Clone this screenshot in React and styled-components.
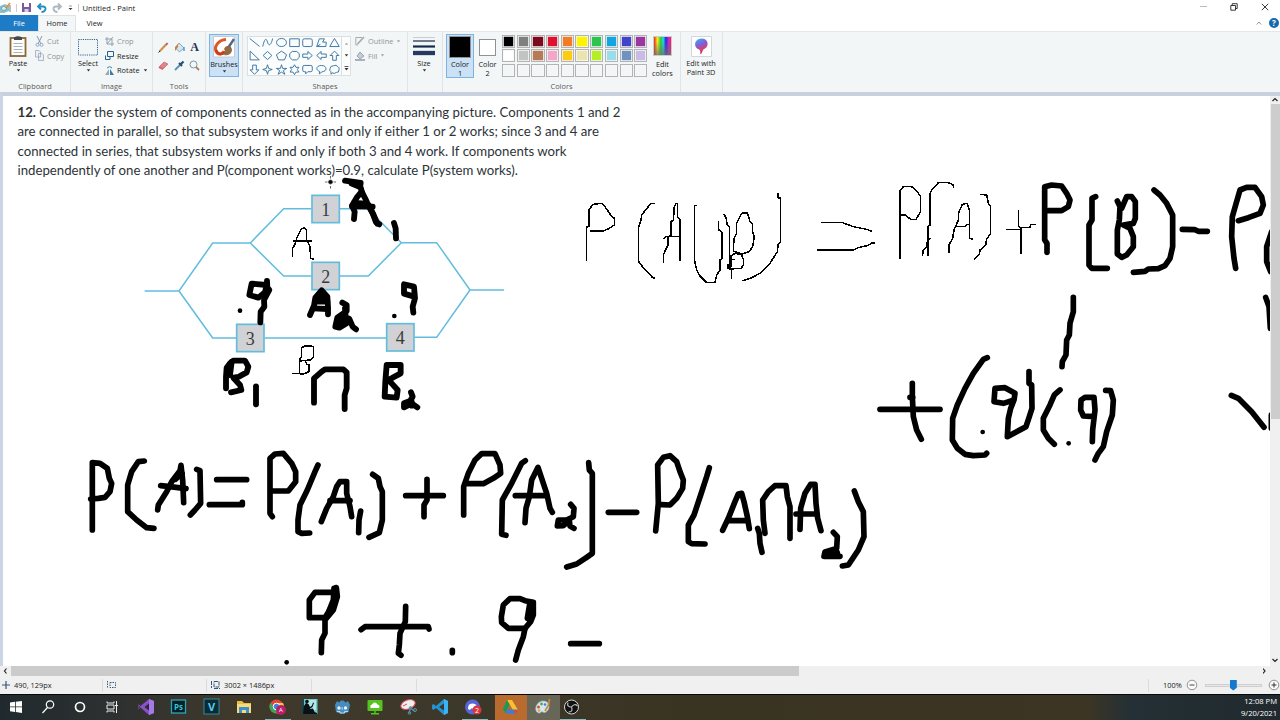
import React from 'react'
import styled, { createGlobalStyle } from 'styled-components'

const palette = [
  '#000000', '#7f7f7f', '#7b0a1c', '#e0102f', '#f47b26', '#fdf500', '#2bc44e', '#12a5e0', '#4044c8', '#9a35a2',
  '#ffffff', '#c3c3c3', '#b67a57', '#f5a6c8', '#fccb15', '#ece4ae', '#b5ee22', '#99dde8', '#7092be', '#c6bce6',
  '', '', '', '', '', '', '', '', '', '',
]

// every shape lives in a 30x30 box
const shapes = [
  'M2 4L29 26', 'M2 26C8 0 12 4 15 14S24 26 29 4', 'M15 4C33 4 33 26 15 26S-3 4 15 4Z', 'M2 5H28V26H2Z',
  'M6 5H24Q28 5 28 9V22Q28 26 24 26H6Q2 26 2 22V9Q2 5 6 5Z', 'M2 26L9 5H23L18 14H28L27 26H2L12 20', 'M15 4L28 26H2Z',
  'M3 3V27H28Z', 'M15 4L27 15L15 26L3 15Z', 'M15 3L29 13L23 27H7L1 13Z', 'M9 4H21L28 10V20L21 27H9L2 20V10Z',
  'M2 11H16V4L28 15L16 26V20H2Z', 'M28 11H14V4L2 15L14 26V20H28Z', 'M10 28V15H3L15 3L27 15H20V28Z',
  'M10 3V16H3L15 28L27 16H20V3Z', 'M15 2L18 12L28 15L18 18L15 28L12 18L2 15L12 12Z',
  'M15 2L18 12H29L20 18L24 28L15 22L6 28L10 18L1 12H12Z',
  'M15 2L19 9H27L23 15L27 22H19L15 29L11 22H3L7 15L3 9H11Z',
  'M6 4H24Q28 4 28 8V17Q28 21 24 21H16L10 27V21H6Q2 21 2 17V8Q2 4 6 4Z',
  'M10 20C-2 17 0 4 15 4S32 20 17 21L9 27Z',
  'M9 24L6 28L5 21Q0 18 3 12Q4 4 12 5Q20 1 24 7Q30 10 27 16Q28 24 20 23Q14 28 9 24Z',
]

// ink strokes: each sheet has an origin and keeps its points at three units per pixel
const sheets = [
  {
    x: 130, y: 175, size: 17.5,
    thin: [
      '488,243 488,220 495,208 500,190 512,165 522,157 530,165 530,195 540,215 542,250 551,253',
      '490,198 543,198',
      '487,596 508,596 508,555 515,545 514,520 523,513 550,514 550,548 540,555 508,558',
      '525,557 530,567 537,570 537,590 520,597 508,596',
    ],
    fat: [
      '672,132 674,110 666,92 680,68 695,50 708,75 715,92 728,115 738,142 748,148',
      '666,94 728,95', '672,84 708,86', '645,17 692,24 690,36 665,26', '693,40 697,58', '716,90 730,118 742,146',
      '792,144 797,160 798,190',
      '411,318 412,338 418,345 402,375 403,395 392,410 391,442',
      '410,330 365,326 358,360 385,368 405,352 410,330',
      '540,420 552,392 556,368 575,346 592,365 594,395 594,418', '556,380 592,380', '550,400 592,402', '566,364 584,366',
      '637,383 650,390 650,408 622,428 616,455 628,458 650,445 658,432 668,455 678,463', '625,435 655,430 630,450', '645,400 648,440',
      '850,413 848,395 855,370 852,335 822,328 822,356 850,364',
      '288,640 288,605 290,578 300,565 310,557 345,557 355,575 350,592 325,606 310,608 330,630 334,645 303,652',
      '305,560 300,600',
      '378,634 378,688',
      '552,683 552,610 575,590 585,583 640,583 650,592 650,640 644,660 644,702',
      '812,570 770,570 766,620 764,665 800,668 803,645 785,625 775,615 812,595 812,570',
      '843,652 848,665 840,678 822,685 822,697 845,685 862,697', '826,690 845,680 845,692',
    ],
    dots: ['330,407', '793,423'],
  },
  {
    x: 570, y: 170, size: 16.5,
    thin: [
      '49,270 49,172 57,168 57,118 70,103 95,100 105,110 122,135 133,145 133,165 118,175 100,183 63,183',
      '254,101 242,101 215,135 213,150 206,170 206,275 220,293 248,323 254,325',
      '281,277 281,252 294,225 294,200 303,195 303,155 310,150 313,110 318,101 323,101 323,140 330,150 330,270',
      '280,206 288,200 330,200',
      '380,107 374,107 374,272 380,300 390,318 410,338 435,338 440,315 450,300 450,270 456,265 456,188 445,178 445,155',
      '462,134 468,142 472,165 478,170 478,290 484,300 484,325', '474,284 474,296 481,296 481,256',
      '490,240 492,205 500,190 500,160 515,130 532,128 540,155 548,162 548,185 553,200 548,230 538,245 515,252 490,243',
      '484,290 484,258 495,250 515,255 520,268 520,285 513,295 478,297', '484,268 492,268',
      '624,71 624,83 632,85 632,215 625,222 622,245 600,280 570,310 545,323 518,332',
      '756,157 815,157 850,170 890,178 905,184', '742,240 850,240 865,233 895,226 905,219 913,219',
    ],
    fat: [],
    dots: [],
  },
  {
    x: 870, y: 170, size: 17,
    thin: [
      '90,264 90,62 100,50 125,50 142,65 152,80 152,125 138,148 122,148 105,135 90,135',
      '251,52 249,44 235,38 205,38 185,60 180,72 180,165 174,170 174,255',
      '158,255 160,240 170,232 170,218 180,205', '174,240 176,205',
      '237,248 237,225 248,205 252,180 265,150 265,130 277,103 292,100 298,120 298,205 307,207',
      '256,170 284,170 290,164 298,164',
      '333,73 350,75 355,100 362,110 362,190 350,208 347,225 330,240 328,252 314,267',
      '411,178 452,178 455,172 480,172 483,164 497,164', '446,121 446,170 453,175 453,249',
    ],
    fat: [
      '531,247 531,220 524,210 524,50 545,45 575,48 590,70 600,90 595,110 575,122 535,122',
      '677,80 666,85 666,150 657,165 657,285 665,295 712,295',
      '742,93 750,110 748,150 742,180 742,252 755,262 770,255 790,230 790,200 780,175 760,165 790,160 796,145 796,95 785,80 770,80 755,115',
      '852,60 870,75 890,100 908,135 908,230 900,265 885,287 865,296 835,297 825,304 790,307',
      '937,178 975,179 985,184 1012,184',
      '1097,295 1092,265 1085,200 1087,140 1097,105 1110,60 1130,52 1155,52 1175,80 1180,105 1170,130 1135,143 1105,152',
      '1205,185 1190,230 1190,275 1202,305',
      '610,382 610,425 600,460 598,495 590,510 588,555 577,575 576,590',
      '1187,382 1197,410 1201,475',
      '30,718 210,718', '127,640 127,680 130,740 140,780 154,808', '120,682 128,682',
      '352,563 340,568 310,610 285,655 262,705 248,745 247,810 262,835 285,853 310,857 345,855 350,850',
      '432,690 400,700 372,695 375,655 405,653 435,670 432,690 422,715 415,745 412,800 440,785 468,770 478,740 486,715 485,645 477,640 477,605',
      '570,660 553,675 540,705 520,745 520,780 535,805 553,823',
      '672,740 640,738 632,720 633,690 645,682 672,682 675,720 668,780 667,815',
      '707,661 722,662 730,690 727,735 710,785 700,830 685,850 675,870',
      '1084,676 1105,685 1145,725 1182,772', '1204,735 1204,775',
    ],
    dots: ['338,786', '596,820'],
  },
  {
    x: 70, y: 440, size: 17,
    thin: [],
    fat: [
      '67,270 67,68 90,70 112,85 118,115 125,130 120,155 105,172 85,175 62,177',
      '223,63 205,65 185,95 173,135 173,215 200,240 230,263 252,265',
      '263,210 265,195 290,155 305,125 330,92 333,76 338,120 341,188', '272,137 300,140 348,146', '316,118 336,100',
      '380,88 390,92 392,190 375,210 361,225',
      '440,119 530,119', '418,194 517,194 517,187',
      '607,230 600,220 600,55 615,42 640,40 665,70 677,95 677,125 655,153 610,153',
      '744,75 735,95 712,150 690,195 684,240 684,275 695,280 719,279',
      '754,245 770,205 790,170 800,140 810,125 830,125 830,160 840,200 845,230', '780,182 840,182',
      '872,213 867,240 866,278',
      '908,103 925,115 930,140 937,155 937,240 928,278 897,292',
      '1007,167 1120,167', '1071,118 1071,180 1062,195 1062,230',
      '799,443 802,470 790,510 765,540 765,580 755,600 754,638',
      '797,457 735,457 718,480 718,533 765,533 785,500', '792,445 790,480 778,510',
      '873,569 885,560 1075,560 1077,567', '1007,499 1006,545 990,580 988,615 985,640 993,646',
      '1147,631 1147,638',
    ],
    dots: ['650,667'],
  },
  {
    x: 440, y: 440, size: 17,
    thin: [],
    fat: [
      '71,225 71,140 85,100 105,60 125,41 165,41 180,75 182,100 160,115 130,131 80,131',
      '256,62 245,70 215,130 187,180 185,283 198,286',
      '255,248 258,205 268,170 275,120 294,82 305,115 320,160 330,205 337,217', '226,167 320,167',
      '392,193 402,205 400,230 380,240 355,240 352,258 370,257 388,242 390,258 402,265',
      '446,68 448,90 457,100 457,340 440,352 410,372 380,381',
      '505,217 590,217',
      '647,273 655,190 653,75 670,52 690,47 710,65 720,95 730,120 728,145 710,175 690,195 665,194',
      '808,83 800,110 782,165 762,225 745,255 745,305 755,311 795,312',
      '848,271 865,235 885,185 895,162 905,160 912,185 922,230 928,266', '870,242 922,242',
      '953,265 958,280 960,310 966,337',
      '975,280 970,240 968,180 985,155 1005,137 1038,137 1042,170 1050,200 1050,295',
      '1080,268 1082,205 1095,160 1112,133 1125,133 1128,190 1133,235 1143,272', '1068,222 1130,222',
      '1180,277 1192,290 1190,325 1155,336 1152,349 1200,349', '1160,343 1192,338',
      '1243,153 1255,185 1270,215 1272,290 1255,330 1225,375 1207,378',
      '280,487 255,482 240,476 210,476 190,495 184,530 185,548 205,565 255,565 272,545 280,525 280,487 270,487 262,535',
      '255,565 250,590 235,630 227,660',
      '392,611 478,611',
    ],
    dots: [],
  },
]

const Svg = ({ w, h, box, children }) => (
  <svg width={w} height={h} viewBox={box || `0 0 ${w} ${h}`} fill="none">{children}</svg>
)

const CaretDown = () => <Svg w={5} h={3}><path d="M.8 .3H4.2L2.5 2.6Z" fill="#333" /></Svg>

const Ink = () => (
  <InkLayer viewBox="3 96 1268 570" fill="none" stroke="#000" strokeLinecap="round" strokeLinejoin="round">
    {sheets.map((s) => (
      <g key={`${s.x}-${s.y}`} transform={`translate(${s.x} ${s.y}) scale(.33333)`}>
        <g shapeRendering="crispEdges" strokeWidth="4.6">{s.thin.map((p) => <polyline key={p} points={p} />)}</g>
        {s.fat.map((p) => <polyline key={p} points={p} strokeWidth={s.size} />)}
        {s.dots.map((p) => <polyline key={p} points={`${p} ${p}`} strokeWidth="14" />)}
      </g>
    ))}
    <g stroke="#444" strokeWidth=".8" strokeLinecap="butt">
      <circle cx="330.5" cy="182" r="2" fill="#000" />
      <path d="M325 182H327.5M333.500 182H336M330.500 176V178.500M330.500 186V188.500" />
    </g>
  </InkLayer>
)

const Diagram = () => (
  <InkLayer viewBox="3 96 1268 570" fill="none">
    <g transform="translate(130 175) scale(.33333)" stroke="#62bddd" strokeWidth="4.600">
      <path d="M44 348H147L248 204H361L461 101H545M629 101H713L814 203H920L1020 345H1122M361 204L461 303H546M630 303H715L814 203M147 348L248 489H320M404 489H769M853 487H920L1020 345" />
      {[[587, 102, 1], [587, 303, 2], [361, 489, 3], [811, 487, 4]].map(([x, y, n]) => (
        <g key={n}>
          <rect x={x - 41} y={y - 41} width="82" height="82" fill="#d0d2d5" strokeWidth="5" />
          <text x={x} y={y + 20} stroke="none" fill="#3a3a3a" fontSize="54" textAnchor="middle" fontFamily="'Liberation Serif', serif">{n}</text>
        </g>
      ))}
    </g>
  </InkLayer>
)

const taskIcons = [
  { w: 32, art: <path d="M5 7.500L10 6.800V11.500H5ZM10.800 6.700L17 6V11.500H10.800ZM5 12.300H10V17L5 16.300ZM10.800 12.300H17V18L10.800 17.100Z" fill="#fff" /> },
  { w: 32, art: <g stroke="#fff" strokeWidth="1.200"><circle cx="13" cy="9.500" r="3.700" /><path d="M10.500 12.500L5.500 18" /></g> },
  { w: 32, art: <circle cx="11" cy="12" r="4.500" stroke="#fff" strokeWidth="1.700" /> },
  { w: 33, art: <path d="M6 6.500V8H13V6.500M6 17.500V16H13V17.500M6 10H13V14H6ZM15.500 6V18M14 10.500H17" stroke="#eee" /> },
  { w: 33, art: <g><path d="M15 4L20 6V18L15 20L6.500 12.500L4.500 14.500V9L6.500 11Z" fill="#8a50c8" /><path d="M15 8.500V15.500L10.500 12ZM5 10.500V13.500L6 12Z" fill="#2c2a2c" /><path d="M15 4L20 6V18L15 20Z" fill="#a778e8" /></g> },
  { w: 33, art: <g><rect x="4.500" y="5" width="14" height="13" fill="#061e26" stroke="#2ca6b5" strokeWidth="1.300" /><text x="11.500" y="14.500" textAnchor="middle" fontSize="8" fontWeight="700" fill="#37c4d6">Ps</text></g> },
  { w: 32, art: <g><rect x="4" y="4" width="15" height="15" fill="#082b35" stroke="#36899c" /><text x="11.500" y="15.500" textAnchor="middle" fontSize="11" fontWeight="700" fill="#57c9e8">V</text></g> },
  { w: 33, art: <g transform="translate(1 0)"><path d="M4 6H9L11 8H18V18H4Z" fill="#ecbc45" /><path d="M4 9H18V18H4Z" fill="#f9d978" /><path d="M6 12H16V18H13V15H9V18H6Z" fill="#3a91cf" /></g> },
  { w: 33, open: true, art: <g transform="translate(1 0)"><circle cx="10.500" cy="11.500" r="7" fill="#e44535" /><path d="M4.500 8A7 7 0 0 0 10 18.500L13 13L8 12Z" fill="#3ba757" /><path d="M11 8H17A7 7 0 0 1 11 18.500L13.500 13Z" fill="#f8c934" /><circle cx="10.500" cy="11.500" r="3.300" fill="#3f80e8" stroke="#fff" /><circle cx="15" cy="15" r="5" fill="#b91f68" /><text x="15" y="17.200" textAnchor="middle" fontSize="6" fill="#fff">A</text></g> },
  { w: 33, art: <g transform="translate(1 0)"><rect x="3" y="4" width="15.500" height="15" fill="#72c7cf" /><rect x="9" y="5" width="8" height="10" fill="#b3e7e8" /><path d="M3 4H5V19H3Z" fill="#15454e" /><circle cx="8" cy="6.500" r="1.800" fill="#071116" /><path d="M4 19L5 11L7 8L9.500 9L11 12L13 10.500L14 7.500L15 8L13.500 12L10.500 14L14 13.500L15.500 17L18 18V19Z" fill="#071116" /></g> },
  { w: 33, art: <g><path d="M4 10L6 6L8 7.500L10 5.500H12.500L14.500 7.500L17 6L19 10L17.500 17Q11 20.500 5 17Z" fill="#478cbf" /><circle cx="8" cy="13" r="1.700" fill="#e9f2f7" /><circle cx="14.500" cy="13" r="1.700" fill="#e9f2f7" /><path d="M11.200 12V15M6 16.500H9V18H13.500V16.500H17" stroke="#d8e8f2" strokeWidth=".8" /></g> },
  { w: 33, art: <g><rect x="3.500" y="5" width="15" height="11" rx="1" fill="#55c41e" /><path d="M7 13A2 2 0 0 1 8 9.500Q11 5.500 13.500 9.500Q16.500 10 15 13Z" fill="#fff" /><path d="M11 16V18M7 18.800H15" stroke="#55c41e" strokeWidth="1.500" /></g> },
  { w: 32, art: <g><ellipse cx="11" cy="9.500" rx="7.500" ry="4.500" transform="rotate(-20 11 9.500)" fill="#f0eeee" stroke="#d54d58" /><path d="M12 12L18 16.500M14 11L12 18" stroke="#5b91ac" strokeWidth="1.300" /><circle cx="18" cy="15" r="1.500" stroke="#5b91ac" /><circle cx="12.500" cy="18" r="1.300" stroke="#5b91ac" /><path d="M6 11L10 9" stroke="#d54d58" /></g> },
  { w: 33, art: <g><path d="M15 4L19 6V18L15 20L7 13L4.500 15L3 14V10L4.500 9L7 11ZM15 8.500L10 12L15 15.500Z" fill="#2493d3" fillRule="evenodd" /><path d="M15 4L19 6V18L15 20Z" fill="#3eb3f4" /></g> },
  { w: 33, open: true, art: <g><circle cx="10.500" cy="12" r="7.500" fill="#5865d8" /><path d="M6 14Q6 10 8 9Q10.500 8 13 9Q15 10 15 14L13 15L12 13.500H9L8 15Z" fill="#fff" /><circle cx="15" cy="15" r="4.500" fill="#d9363e" /><text x="15" y="17.600" textAnchor="middle" fontSize="7" fill="#fff">2</text></g> },
  { w: 32, tile: '#b96a2e', art: <g transform="translate(5 0)"><path d="M7 5H12L18 15H13Z" fill="#f8c02c" /><path d="M7 5L9.500 9.500L5.500 18L3 14Z" fill="#169a56" /><path d="M7.500 14.500H18L15.500 18.500H5.500Z" fill="#3b7ce2" /><path d="M13 15H18L15.500 18.500Z" fill="#d94832" /></g> },
  { w: 33, tile: '#676657', art: <g transform="translate(5 0)"><path d="M10 6C18 5 19 14 14 17C11 19 11 15 8 18C2 19 2 8 10 6Z" fill="#d6e6ef" stroke="#95b4c5" strokeWidth=".7" /><circle cx="6.500" cy="12" r="1.500" fill="#e24b3c" /><circle cx="9.500" cy="9" r="1.400" fill="#50ad4b" /><circle cx="13" cy="9.500" r="1.300" fill="#3b87d8" /><circle cx="7" cy="15.500" r="1.300" fill="#e1aa2d" /><path d="M17.500 4L16.500 10L13 16" stroke="#c98a3a" strokeWidth="1.700" /></g> },
  { w: 36, open: true, art: <g><circle cx="11.500" cy="12" r="7" fill="#111" stroke="#d5d5d5" /><path d="M11.500 12Q6.500 12 8 7.500M11.500 12Q14.500 8 17.500 11M11.500 12Q13.500 17 8.500 17" stroke="#b9b9b9" strokeWidth="1.200" /></g> },
]

export default function App() {
  return (
    <>
      <Global />
      <Window>
        <TitleBar>
          <Svg w={12} h={12}><path d="M0 4L5 2L9 4V9L4 11H0Z" fill="#8ac1d1" /><path d="M1 6L4 4L7 7L3 9Z" fill="#dcebd8" stroke="#4e92a9" strokeWidth=".7" /><path d="M6 6L10 1" stroke="#df9238" strokeWidth="1.600" /><path d="M10 3V10" stroke="#777" /></Svg>
          <Bar />
          <Svg w={9} h={9}><path d="M0 0H9V9H0Z" fill="#7b579d" /><path d="M2 0H7V4H2Z" fill="#fff" /><path d="M2.500 6H6.500V9H2.500Z" fill="#d9cce7" /></Svg>
          <Svg w={10} h={10}><path d="M4 .5L1 3.500L4 6.500M1.500 3.500H6C10 3.500 9 9 4.500 9" stroke="#228fc0" strokeWidth="1.800" /></Svg>
          <Svg w={10} h={10}><path d="M6 .5L9 3.500L6 6.500M8.500 3.500H4C0 3.500 1 9 5.500 9" stroke="#acb7c1" strokeWidth="1.800" /></Svg>
          <Svg w={5} h={6}><path d="M1 1H4" stroke="#777" strokeWidth=".7" /><path d="M.5 3H4.500L2.500 5Z" fill="#333" /></Svg>
          <Bar />
          <Title>Untitled - Paint</Title>
          <Controls>
            <Svg w={7} h={9}><path d="M0 3.500H7" stroke="#bbb" /></Svg>
            <Svg w={8} h={8}><path d="M.8 2.500H5.500V7.200H.8ZM2.200 2.500V.7H7.200V5.500H5.500" stroke="#222" strokeWidth=".9" /></Svg>
            <Svg w={8} h={8}><path d="M.8 .8L7.200 7.200M7.200 .8L.8 7.200" stroke="#222" strokeWidth=".9" /></Svg>
          </Controls>
        </TitleBar>
        <Tabs>
          <Tab $kind="file">File</Tab>
          <Tab $kind="home">Home</Tab>
          <Tab>View</Tab>
          <Help>
            <Svg w={6} h={4}><path d="M.7 3.500L3 1L5.300 3.500" stroke="#777" strokeWidth=".8" /></Svg>
            <HelpDot>?</HelpDot>
          </Help>
        </Tabs>

        <Ribbon>
          <Group $w={71}>
            <Tools $pad="2px 0 0 5px" $gap={4}>
              <BigButton $w={26}>
                <Svg w={18} h={22}><rect x="1.500" y="3" width="15" height="18" fill="#fff" stroke="#8d6632" strokeWidth="1.800" /><path d="M4.500 8.500H13.500M4.500 11.500H13.500M4.500 14.500H13.500M4.500 17.500H13.500" stroke="#a9b4bb" /><path d="M5 2.500Q9 0 13 2.500V5H5Z" fill="#46474b" /></Svg>
                <Caption>Paste</Caption><CaretDown />
              </BigButton>
              <SmallList $top={2}>
                <SmallItem $off><Svg w={9} h={11}><path d="M2 0L6 8M7 0L3 8" stroke="#8b97a5" /><circle cx="2.500" cy="8.800" r="1.500" stroke="#8ca9cc" /><circle cx="6.500" cy="8.800" r="1.500" stroke="#8ca9cc" /></Svg>Cut</SmallItem>
                <SmallItem $off><Svg w={9} h={11}><path d="M.5 .5H4L5.500 2V7H.5ZM3.500 3.500H7L8.500 5V10.500H3.500Z" fill="#edf0f4" stroke="#9ba8b9" strokeWidth=".8" /></Svg>Copy</SmallItem>
              </SmallList>
            </Tools>
            <GroupName>Clipboard</GroupName>
          </Group>

          <Group $w={82}>
            <Tools $pad="3px 0 0 5px" $gap={5}>
              <BigButton $w={24}>
                <Svg w={22} h={21}><path d="M1.500 3.500H20.500V19H1.500Z" stroke="#2f6496" strokeDasharray="1.200 1" /></Svg>
                <Caption>Select</Caption><CaretDown />
              </BigButton>
              <SmallList $top={1}>
                <SmallItem $off><Svg w={9} h={9}><path d="M2 0V7H9M0 2H7V9M8 0L2 7" stroke="#91a0b0" /></Svg>Crop</SmallItem>
                <SmallItem><Svg w={9} h={9}><path d="M2.500 .5H8.500V5.500H2.500ZM.5 4.500V8.500H5V6" stroke="#285f91" /></Svg>Resize</SmallItem>
                <SmallItem><Svg w={9} h={9}><path d="M4 3V9H0Z" fill="#9ca7b0" /><path d="M5 3V9H9Z" fill="#347eb3" /><path d="M2 2Q5-1 7 2" stroke="#347eb3" /></Svg>Rotate <CaretDown /></SmallItem>
              </SmallList>
            </Tools>
            <GroupName>Image</GroupName>
          </Group>

          <Group $w={53}>
            <ToolGrid>
              <Svg w={11} h={11}><path d="M1.500 9.500L8 2.500" stroke="#cc9148" strokeWidth="2" /><path d="M8 3L9.500 1" stroke="#c45a61" strokeWidth="2" /><path d="M.5 10.500L2 9" stroke="#222" /></Svg>
              <Svg w={11} h={11}><path d="M5 1L10 6L5.500 10L1.500 6Z" fill="#d6e5ef" stroke="#6597b7" strokeWidth=".8" /><path d="M1 5L4 2V5L1 9Z" fill="#d37a3e" /><path d="M10 5V9" stroke="#5a9ac8" strokeWidth="1.500" /></Svg>
              <ToolLetter>A</ToolLetter>
              <Svg w={11} h={11}><path d="M1 7L6 2L10 4L5 9Z" fill="#e5838a" stroke="#b65a64" strokeWidth=".6" /><path d="M1 7L5 9" stroke="#d36b73" strokeWidth="2" /></Svg>
              <Svg w={11} h={11}><path d="M1 10L6 5" stroke="#5a91ad" strokeWidth="1.800" /><path d="M5 3L8 6M7 4L9.500 1.500" stroke="#244f7b" strokeWidth="2.200" /></Svg>
              <Svg w={11} h={11}><circle cx="4.500" cy="4.500" r="3.500" fill="#f1f8fa" stroke="#7f98a8" /><path d="M7 7L10 10" stroke="#b07e58" strokeWidth="1.800" /></Svg>
            </ToolGrid>
            <GroupName>Tools</GroupName>
          </Group>

          <Group $w={37}>
            <Tools $pad="2px 3px 0" $gap={0}>
              <BigButton $w={30} $h={43} $active>
                <Svg w={22} h={23}>
                  <path d="M.5 1.500H21.500V22H.5Z" fill="#fff" stroke="#c6cbd1" />
                  <path d="M13 4.500C5 5 1 12 3 16C5 21 10 19 11 16" stroke="#dc572a" strokeWidth="3" />
                  <path d="M3 15C5 20 9 20 12 17" stroke="#c23f1c" strokeWidth="2.500" />
                  <path d="M11 14Q13 10 17 11Q21 15 17 19Q14 21 11 20Q13 17 11 14Z" fill="#8f6a43" />
                  <path d="M16 11.500L21 4" stroke="#53687d" strokeWidth="2.400" />
                </Svg>
                <Caption>Brushes</Caption><CaretDown />
              </BigButton>
            </Tools>
          </Group>

          <Group $w={165}>
            <Tools $pad="4px 0 0 4px" $gap={4}>
              <Gallery>
                <ShapeGrid>
                  {shapes.map((d) => <Svg key={d} w={11} h={11} box="0 0 30 30"><path d={d} stroke="#3a76a3" strokeWidth="2.600" /></Svg>)}
                </ShapeGrid>
                <GalleryArrows>
                  <Svg w={5} h={3}><path d="M.8 2.700H4.200L2.500 .4Z" fill="#aaa" /></Svg>
                  <CaretDown />
                  <Svg w={5} h={5}><path d="M.5 .5H4.500" stroke="#333" strokeWidth=".8" /><path d="M.5 2H4.500L2.500 4.500Z" fill="#333" /></Svg>
                </GalleryArrows>
              </Gallery>
              <SmallList>
                <SmallItem $off><Svg w={10} h={10}><path d="M7 1.500H.8V9H3" stroke="#a4adb5" /><path d="M2.500 8L9 1" stroke="#a4adb5" strokeWidth="1.800" /></Svg>Outline <CaretDown /></SmallItem>
                <SmallItem $off><Svg w={10} h={10}><path d="M5 1L9 5L5 8L2 5Z" fill="#c6ccd4" stroke="#9aa5b4" /><path d="M0 9H10" stroke="#a9b1be" strokeWidth="2" /></Svg>Fill <CaretDown /></SmallItem>
              </SmallList>
            </Tools>
            <GroupName>Shapes</GroupName>
          </Group>

          <Group $w={35}>
            <Tools $pad="2px 2px 0" $gap={0}>
              <BigButton $w={28}>
                <Svg w={22} h={22}><path d="M0 2.500H22" stroke="#c6ccd3" /><path d="M0 6H22" stroke="#172742" strokeWidth="1.200" /><path d="M0 11.500H22" stroke="#172a4e" strokeWidth="2.200" /><path d="M0 18H22" stroke="#263962" strokeWidth="4.300" /></Svg>
                <Caption>Size</Caption><CaretDown />
              </BigButton>
            </Tools>
          </Group>

          <Group $w={238}>
            <Tools $pad="2px 0 0 3px" $gap={0}>
              <BigButton $w={28} $h={44} $active><Chip $size={22} $bg="#000" />Color<br />1</BigButton>
              <BigButton $w={27} $h={44}><Chip $size={17} $bg="#fff" />Color<br />2</BigButton>
              <Palette>{palette.map((c, i) => <Swatch key={i} $color={c} />)}</Palette>
              <BigButton $w={30} $h={44}>
                <Rainbow />
                Edit<br />colors
              </BigButton>
            </Tools>
            <GroupName>Colors</GroupName>
          </Group>

          <Group $w={42}>
            <Tools $pad="2px 0 0 1px" $gap={0}>
              <BigButton $w={38} $h={44}>
                <Svg w={21} h={24}>
                  <defs><linearGradient id="drop" x1="0" y1="0" x2=".4" y2="1"><stop stopColor="#23c3e9" /><stop offset=".45" stopColor="#7f60df" /><stop offset=".8" stopColor="#d2436b" /><stop offset="1" stopColor="#b7332d" /></linearGradient></defs>
                  <path d="M.5 1.500H20.500V21.500H.5Z" fill="#fff" stroke="#d3d7dc" />
                  <path d="M10.500 3.500C18 3.500 18 11.500 14 13.500C11 14.500 12 17.500 9.500 19.500C9 17.500 10 15.500 8 14.500C2 12.500 3 3.500 10.500 3.500Z" fill="url(#drop)" />
                </Svg>
                Edit with<br />Paint 3D
              </BigButton>
            </Tools>
          </Group>
        </Ribbon>

        <Workspace>
          <Page>
            <Problem>
              <b>12.</b> Consider the system of components connected as in the accompanying picture. Components 1 and 2<br />
              are connected in parallel, so that subsystem works if and only if either 1 or 2 works; since 3 and 4 are<br />
              connected in series, that subsystem works if and only if both 3 and 4 work. If components work<br />
              independently of one another and P(component works)=0.9, calculate P(system works).
            </Problem>
            <Diagram />
            <Ink />
          </Page>
          <VScroll>
            <Svg w={9} h={8}><path d="M2.500 5L5 2.500L7.500 5" stroke="#222" strokeWidth="1.200" /></Svg>
            <VThumb />
            <Svg w={9} h={10}><path d="M2.500 3L5 5.500L7.500 3" stroke="#222" strokeWidth="1.200" /></Svg>
          </VScroll>
        </Workspace>
        <HScroll>
          <Svg w={11} h={10}><path d="M6.500 2.500L4.500 5L6.500 7.500" stroke="#222" strokeWidth="1.200" /></Svg>
          <HThumb />
          <Svg w={17} h={10}><path d="M0 2.500L2 5L0 7.500" stroke="#222" strokeWidth="1.200" /></Svg>
        </HScroll>
        <Status>
          <Cell $w={101}><Svg w={8} h={8}><path d="M0 4H8M4 0V8" stroke="#35577b" strokeWidth="1.200" /></Svg>490, 129px</Cell>
          <Cell $w={104} $left={4}><Svg w={9} h={8}><path d="M.5 0V7M3 1.500H8.500V6.500H3Z" stroke="#35577b" strokeDasharray="1.500 1" /></Svg></Cell>
          <Cell $w={105} $left={4}><Svg w={9} h={8}><path d="M.5 0V7M3 .5H8V6H3ZM3 7.500H9" stroke="#35577b" strokeDasharray="4 1" /></Svg>3002 × 1486px</Cell>
          <Cell $w={105} />
          <Cell $w={732} />
          <Zoom>
            100%
            <Svg w={12} h={12}><circle cx="6" cy="6" r="4.800" fill="#fafafa" stroke="#777" strokeWidth=".8" /><path d="M3.500 6H8.500" stroke="#444" /></Svg>
            <Track><Knob /></Track>
            <Svg w={12} h={12}><circle cx="6" cy="6" r="4.800" fill="#fafafa" stroke="#777" strokeWidth=".8" /><path d="M3.500 6H8.500M6 3.500V8.500" stroke="#333" /></Svg>
          </Zoom>
        </Status>
        <Taskbar>
          {taskIcons.map((t, i) => (
            <Task key={i} $w={t.w} $tile={t.tile} $open={t.open}>
              <Svg w={30} h={25}>{t.art}</Svg>
            </Task>
          ))}
          <Clock>12:08 PM<br />9/20/2021</Clock>
        </Taskbar>
      </Window>
    </>
  )
}

const Global = createGlobalStyle`
*{
  box-sizing:border-box;
}
body{
  margin:0;
  background-color:#fff;
}
svg{
  display:block;
  flex:none;
}
`
const Window = styled.div`
width:1280px;
height:720px;
display:flex;
flex-direction:column;
overflow:hidden;
font-family:"Open Sans", sans-serif;
font-size:7.4px;
color:#222;
`
const TitleBar = styled.div`
height:15px;
flex:none;
display:flex;
align-items:center;
gap:5.500px;
& > svg:first-child{
  margin-right:-2px;
}
`
const Bar = styled.span`
width:1px;
height:8px;
background-color:#ccc;
`
const Title = styled.span`
font-size:7.6px;
margin-left:-2px;
`
const Controls = styled.div`
margin-left:auto;
padding-right:11px;
padding-bottom:1px;
display:flex;
align-items:center;
gap:23px;
`
const Tabs = styled.div`
height:16px;
flex:none;
display:flex;
`
const Tab = styled.div`
width:${p => p.$kind ? '38px' : '37px'};
line-height:17px;
text-align:center;
font-size:7.4px;
${p => p.$kind === 'file' && 'background-color:#1e7bc5; color:#fff;'}
${p => p.$kind === 'home' && 'background-color:#f4f7f7; border:1px solid #dfe3e5; border-bottom:none; line-height:15px; position:relative; z-index:1;'}
`
const Help = styled.div`
margin-left:auto;
display:flex;
align-items:center;
gap:7px;
padding-right:1px;
`
const HelpDot = styled.span`
width:10px;
height:10px;
border-radius:50%;
background-color:#1769ad;
color:#fff;
font-weight:700;
font-size:8px;
line-height:10px;
text-align:center;
`
const Ribbon = styled.div`
height:61px;
flex:none;
display:flex;
background-color:#f3f6f6;
border-top:1px solid #e3e7e8;
`
const Group = styled.div`
width:${p => p.$w}px;
height:60px;
display:flex;
flex-direction:column;
justify-content:space-between;
border-right:1px solid #e1e4e6;
`
const Tools = styled.div`
display:flex;
align-items:flex-start;
gap:${p => p.$gap}px;
padding:${p => p.$pad};
`
const GroupName = styled.div`
text-align:center;
line-height:10px;
padding-bottom:1px;
color:#5a5a5a;
`
const BigButton = styled.div`
width:${p => p.$w}px;
height:${p => p.$h || 44}px;
flex:none;
display:flex;
flex-direction:column;
align-items:center;
text-align:center;
line-height:8.5px;
font-size:7.3px;
white-space:nowrap;
border:1px solid ${p => p.$active ? '#7fb3df' : 'transparent'};
background-color:${p => p.$active ? '#cbe1f5' : 'transparent'};
`
const Caption = styled.span`
line-height:12px;
`
const SmallList = styled.div`
display:flex;
flex-direction:column;
gap:4.500px;
padding-top:${p => p.$top || 0}px;
`
const SmallItem = styled.div`
display:flex;
align-items:center;
gap:3px;
height:10px;
white-space:nowrap;
color:${p => p.$off ? '#8f9498' : '#222'};
& > svg:last-child:not(:first-child){
  opacity:${p => p.$off ? .4 : 1};
}
`
const ToolGrid = styled.div`
display:grid;
grid-template-columns:repeat(3, 15.500px);
grid-auto-rows:18.500px;
justify-content:center;
justify-items:center;
align-items:center;
padding-top:6px;
`
const ToolLetter = styled.span`
font-family:"Liberation Serif", serif;
font-weight:700;
font-size:12px;
line-height:11px;
color:#1d3557;
`
const Gallery = styled.div`
width:104px;
height:40px;
display:flex;
background-color:#fbfcfc;
border:1px solid #dbdfe2;
`
const ShapeGrid = styled.div`
flex:1;
display:grid;
grid-template-columns:repeat(7, 13.300px);
grid-auto-rows:13.300px;
justify-items:center;
align-items:center;
margin-top:-1px;
`
const GalleryArrows = styled.div`
width:10px;
display:flex;
flex-direction:column;
align-items:center;
justify-content:space-around;
border-left:1px solid #dbdfe2;
`
const Chip = styled.span`
width:${p => p.$size}px;
height:${p => p.$size}px;
margin:${p => (22 - p.$size) / 2 + 1}px 0 ${p => (22 - p.$size) / 2 + 2}px;
flex:none;
background-color:${p => p.$bg};
border:1px solid #8d9297;
`
const Palette = styled.div`
display:grid;
grid-template-columns:repeat(10, 13.200px);
grid-auto-rows:13.200px;
gap:1.500px;
margin-left:1px;
margin-top:.5px;
`
const Swatch = styled.span`
border:1px solid #b3b3b3;
background-color:${p => p.$color || '#f3f6f6'};
box-shadow:inset 0 0 0 .8px #f7f9f9;
`
const Rainbow = styled.span`
width:19px;
height:20px;
flex:none;
margin:1px 0 4px;
border:1px solid #ccc;
background:linear-gradient(transparent 25%, rgba(110,110,110,.75)), linear-gradient(90deg, #f02020, #f5ee20 20%, #23cf35 40%, #20d5e0 55%, #2626e0 70%, #e022d0 88%, #ee2040);
`
const Workspace = styled.div`
height:574px;
flex:none;
display:flex;
border-top:4px solid #c8d1dd;
border-left:3px solid #cbd5e3;
`
const Page = styled.div`
flex:1;
position:relative;
overflow:hidden;
background-color:#fff;
`
const Problem = styled.p`
margin:0;
padding:7px 0 0 14.500px;
font-family:Lato, sans-serif;
font-size:13.21px;
line-height:19.400px;
white-space:nowrap;
color:#2c3338;
`
const InkLayer = styled.svg`
position:absolute;
left:0;
top:0;
width:1268px;
height:570px;
`
const VScroll = styled.div`
width:10px;
display:flex;
flex-direction:column;
background-color:#f0f0f0;
& > svg:last-child{
  margin-top:auto;
}
`
const VThumb = styled.div`
height:315px;
margin-left:1px;
background-color:#cdcdcd;
`
const HScroll = styled.div`
height:10px;
flex:none;
display:flex;
background-color:#f0f0f0;
& > svg:last-child{
  margin-left:auto;
}
`
const HThumb = styled.div`
width:788px;
background-color:#cbcbcb;
`
const Status = styled.div`
height:18px;
flex:none;
display:flex;
align-items:center;
background-color:#f0f0f0;
padding-left:2px;
font-size:7.4px;
`
const Cell = styled.div`
width:${p => p.$w}px;
height:13px;
flex:none;
display:flex;
align-items:center;
gap:4px;
padding-left:${p => p.$left || 0}px;
border-right:1px solid #dcdcdc;
`
const Zoom = styled.div`
display:flex;
align-items:center;
gap:4px;
padding-left:14px;
white-space:nowrap;
`
const Track = styled.div`
width:57px;
height:3px;
margin:0 2px 0 3px;
border:1px solid #cfcfcf;
background-color:#e8e8e8;
display:flex;
align-items:center;
`
const Knob = styled.span`
width:7px;
height:11px;
flex:none;
margin-left:24px;
background-color:#1479cf;
clip-path:polygon(0 0, 100% 0, 100% 75%, 50% 100%, 0 75%);
`
const Taskbar = styled.div`
height:26px;
flex:none;
display:flex;
border-top:1px solid #080808;
padding-left:5px;
background:linear-gradient(90deg, #202a2e 0, #2d3030 110px, #3f392b 230px, #3c3829 480px, #393321 700px, #3d3523 1085px, #243035 1130px, #20292e 100%);
`
const Task = styled.div`
width:${p => p.$w}px;
height:25px;
flex:none;
overflow:hidden;
${p => p.$tile && `background-color:${p.$tile};`}
${p => p.$open && 'background-image:linear-gradient(#85b9c4, #85b9c4); background-size:26px 1px; background-position:0 100%; background-repeat:no-repeat;'}
& + &:last-of-type{
  margin-left:0;
}
`
const Clock = styled.div`
margin-left:auto;
padding-right:3px;
text-align:right;
line-height:12px;
font-size:7.6px;
color:#fff;
`
